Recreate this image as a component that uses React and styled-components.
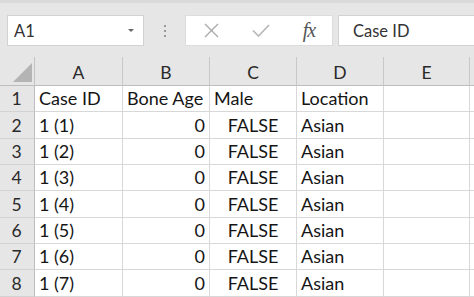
import React from "react";
import styled, { createGlobalStyle } from "styled-components";

const Global = createGlobalStyle`
  html, body { margin: 0; padding: 0; background: #e6e6e6; overflow: hidden; }
  body { font-family: Lato, "Open Sans", sans-serif; }
`;

const Page = styled.div`
  width: 474px;
  height: 297px;
  background: #e6e6e6;
  border-top: 3px solid #dadada;
  box-sizing: border-box;
  overflow: hidden;
`;

const FormulaBar = styled.div`
  display: flex;
  align-items: stretch;
  height: 31px;
  margin-top: 12px;
  padding-left: 7px;
`;

const NameBox = styled.div`
  width: 137px;
  box-sizing: border-box;
  background: #fff;
  border: 1px solid #d2d2d2;
  display: flex;
  align-items: center;
  justify-content: space-between;
  padding: 0 9px 0 6px;
  font-size: 16.5px;
  color: #333;
`;

const Arrow = styled.span`
  width: 0;
  height: 0;
  border-left: 3px solid transparent;
  border-right: 3px solid transparent;
  border-top: 3px solid #666;
`;

const Grip = styled.div`
  width: 41px;
  display: flex;
  flex-direction: column;
  align-items: center;
  justify-content: center;
  gap: 3px;
`;

const Dot = styled.span`
  width: 2px;
  height: 2px;
  background: #9a9a9a;
`;

const ButtonGroup = styled.div`
  width: 148px;
  box-sizing: border-box;
  background: #fff;
  border: 1px solid #dcdcdc;
  display: flex;
  align-items: center;
`;

const IconSlot = styled.div`
  width: ${(p) => p.$w}px;
  display: flex;
  justify-content: center;
  align-items: center;
`;

const Fx = styled.span`
  font-family: "Liberation Serif", "DejaVu Serif", serif;
  font-style: italic;
  font-size: 20px;
  color: #555;
  letter-spacing: -1px;
`;

const FormulaInput = styled.div`
  flex: 1;
  margin-left: 5px;
  background: #fff;
  border: 1px solid #d2d2d2;
  border-right: none;
  display: flex;
  align-items: center;
  padding-left: 14px;
  font-size: 16.5px;
  color: #333;
`;

const Sheet = styled.div`
  margin-top: 11px;
  display: grid;
  grid-template-columns: 35px 88px 87px 87px 87px 86px 1fr;
  grid-template-rows: 29px repeat(8, 26.33px);
  background: #fff;
`;

const Corner = styled.div`
  background: #e6e6e6;
  border-right: 1px solid #c4c4c4;
  border-bottom: 1px solid #bdbdbd;
  position: relative;
`;

const Tri = styled.div`
  position: absolute;
  right: 2px;
  bottom: 3px;
  width: 0;
  height: 0;
  border-left: 19px solid transparent;
  border-bottom: 19px solid #b4b4b4;
`;

const ColHead = styled.div`
  background: #e6e6e6;
  border-right: 1px solid #c8c8c8;
  border-bottom: 1px solid #bdbdbd;
  display: flex;
  align-items: flex-end;
  justify-content: center;
  padding-bottom: 2px;
  font-size: 17.5px;
  color: #2a2a2a;
`;

const RowHead = styled.div`
  background: #e6e6e6;
  border-right: 1px solid #bdbdbd;
  border-bottom: 1px solid #d2d2d2;
  display: flex;
  align-items: flex-end;
  justify-content: center;
  padding-bottom: 2px;
  padding-right: 1px;
  font-size: 17.5px;
  color: #2a2a2a;
`;

const Cell = styled.div`
  background: #fff;
  border-right: 1px solid #d8d8d8;
  border-bottom: 1px solid #d8d8d8;
  display: flex;
  align-items: flex-end;
  padding: 0 4px 2px 4px;
  justify-content: ${(p) =>
    p.$align === "right" ? "flex-end" : p.$align === "center" ? "center" : "flex-start"};
  font-size: 18px;
  color: #151515;
  white-space: nowrap;
  overflow: hidden;
`;

const cols = ["A", "B", "C", "D", "E", ""];

const rows = [
  [{ v: "Case ID" }, { v: "Bone Age" }, { v: "Male" }, { v: "Location" }],
  ...Array.from({ length: 7 }, (_, i) => [
    { v: `1 (${i + 1})` },
    { v: "0", a: "right" },
    { v: "FALSE", a: "center" },
    { v: "Asian" },
  ]),
];

export default function App() {
  return (
    <Page>
      <Global />
      <FormulaBar>
        <NameBox>
          <span>A1</span>
          <Arrow />
        </NameBox>
        <Grip>
          <Dot />
          <Dot />
          <Dot />
        </Grip>
        <ButtonGroup>
          <IconSlot $w={50}>
            <svg width="15" height="15" viewBox="0 0 15 15">
              <path d="M1 1L14 14M14 1L1 14" stroke="#a8a8a8" strokeWidth="1.3" fill="none" />
            </svg>
          </IconSlot>
          <IconSlot $w={50}>
            <svg width="18" height="13" viewBox="0 0 18 13">
              <path d="M1 6.5L6.5 12L17 1" stroke="#b8b8b8" strokeWidth="1.7" fill="none" />
            </svg>
          </IconSlot>
          <IconSlot $w={46}>
            <Fx>fx</Fx>
          </IconSlot>
        </ButtonGroup>
        <FormulaInput>Case ID</FormulaInput>
      </FormulaBar>
      <Sheet>
        <Corner>
          <Tri />
        </Corner>
        {cols.map((c, i) => (
          <ColHead key={i}>{c}</ColHead>
        ))}
        {rows.map((r, ri) => (
          <React.Fragment key={ri}>
            <RowHead>{ri + 1}</RowHead>
            {r.map((cell, ci) => (
              <Cell key={ci} $align={cell.a}>
                {cell.v}
              </Cell>
            ))}
            <Cell />
            <Cell />
          </React.Fragment>
        ))}
      </Sheet>
    </Page>
  );
}
